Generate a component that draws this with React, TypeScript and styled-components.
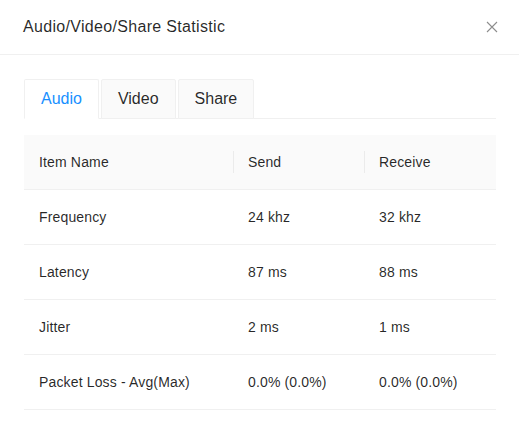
import React, { useState } from 'react';
import styled, { createGlobalStyle } from 'styled-components';

const GlobalStyle = createGlobalStyle`
	html, body {
		margin: 0;
		padding: 0;
		background: #ffffff;
	}
	body {
		font-family: 'Liberation Sans', Arial, sans-serif;
		font-size: 14px;
		color: rgba(0, 0, 0, 0.85);
		-webkit-font-smoothing: antialiased;
	}
	* {
		box-sizing: border-box;
	}
`;

interface StatRow {
	name: string;
	send: string;
	receive: string;
}

const tabs = ['Audio', 'Video', 'Share'];

const data: Record<string, StatRow[]> = {
	Audio: [
		{ name: 'Frequency', send: '24 khz', receive: '32 khz' },
		{ name: 'Latency', send: '87 ms', receive: '88 ms' },
		{ name: 'Jitter', send: '2 ms', receive: '1 ms' },
		{ name: 'Packet Loss - Avg(Max)', send: '0.0% (0.0%)', receive: '0.0% (0.0%)' },
	],
	Video: [
		{ name: 'Frame Rate', send: '24 fps', receive: '30 fps' },
		{ name: 'Resolution', send: '1280*720', receive: '1280*720' },
		{ name: 'Latency', send: '87 ms', receive: '88 ms' },
		{ name: 'Jitter', send: '2 ms', receive: '1 ms' },
	],
	Share: [
		{ name: 'Frame Rate', send: '-', receive: '-' },
		{ name: 'Resolution', send: '-', receive: '-' },
	],
};

const App: React.FC = () => {
	const [active, setActive] = useState('Audio');
	return (
		<>
			<GlobalStyle />
			<Modal>
				<Header>
					<Title>Audio/Video/Share Statistic</Title>
					<CloseButton aria-label="Close">
						<svg width="12" height="12" viewBox="0 0 12 12">
							<path d="M1 1 L11 11 M11 1 L1 11" stroke="currentColor" strokeWidth="1.1" fill="none" />
						</svg>
					</CloseButton>
				</Header>
				<Body>
					<TabBar>
						{tabs.map((t) => (
							<Tab key={t} active={active === t} onClick={() => setActive(t)}>
								{t}
							</Tab>
						))}
					</TabBar>
					<Table>
						<colgroup>
							<col style={{ width: 209 }} />
							<col style={{ width: 131 }} />
							<col />
						</colgroup>
						<thead>
							<tr>
								<Th>Item Name</Th>
								<Th divider>Send</Th>
								<Th divider>Receive</Th>
							</tr>
						</thead>
						<tbody>
							{data[active].map((row) => (
								<tr key={row.name}>
									<Td>{row.name}</Td>
									<Td>{row.send}</Td>
									<Td>{row.receive}</Td>
								</tr>
							))}
						</tbody>
					</Table>
				</Body>
			</Modal>
		</>
	);
};

const Modal = styled.div`
	width: 520px;
	background: #ffffff;
`;

const Header = styled.div`
	display: flex;
	align-items: center;
	justify-content: space-between;
	height: 55px;
	padding: 0 0 0 23px;
	border-bottom: 1px solid #f0f0f0;
`;

const Title = styled.div`
	font-size: 16px;
	line-height: 22px;
	letter-spacing: 0.32px;
	color: rgba(0, 0, 0, 0.85);
`;

const CloseButton = styled.button`
	display: flex;
	align-items: center;
	justify-content: center;
	width: 56px;
	height: 54px;
	padding: 0;
	border: 0;
	background: transparent;
	color: rgba(0, 0, 0, 0.45);
	cursor: pointer;
`;

const Body = styled.div`
	padding: 24px 24px 25px;
`;

const TabBar = styled.div`
	display: flex;
	gap: 2px;
	border-bottom: 1px solid #f0f0f0;
	margin-bottom: 16px;
`;

const Tab = styled.div<{ active?: boolean }>`
	padding: 8px 16px;
	font-size: 16px;
	line-height: 22px;
	border: 1px solid #f0f0f0;
	border-radius: 2px 2px 0 0;
	margin-bottom: -1px;
	background: ${(p) => (p.active ? '#ffffff' : '#fafafa')};
	border-bottom-color: ${(p) => (p.active ? '#ffffff' : '#f0f0f0')};
	color: ${(p) => (p.active ? '#1890ff' : 'rgba(0, 0, 0, 0.85)')};
	cursor: pointer;
`;

const Table = styled.table`
	width: 100%;
	table-layout: fixed;
	border-collapse: collapse;
	font-size: 14px;
	letter-spacing: 0.15px;
`;

const Th = styled.th<{ divider?: boolean }>`
	position: relative;
	text-align: left;
	font-weight: normal;
	padding: 16px 15px;
	line-height: 22px;
	background: #fafafa;
	border-bottom: 1px solid #f0f0f0;
	color: rgba(0, 0, 0, 0.85);
	&::before {
		content: '';
		display: ${(p) => (p.divider ? 'block' : 'none')};
		position: absolute;
		left: 0;
		top: 50%;
		width: 1px;
		height: 22px;
		transform: translateY(-50%);
		background: rgba(0, 0, 0, 0.06);
	}
`;

const Td = styled.td`
	padding: 16px 15px;
	line-height: 22px;
	border-bottom: 1px solid #f0f0f0;
	color: rgba(0, 0, 0, 0.85);
`;

export default App;
